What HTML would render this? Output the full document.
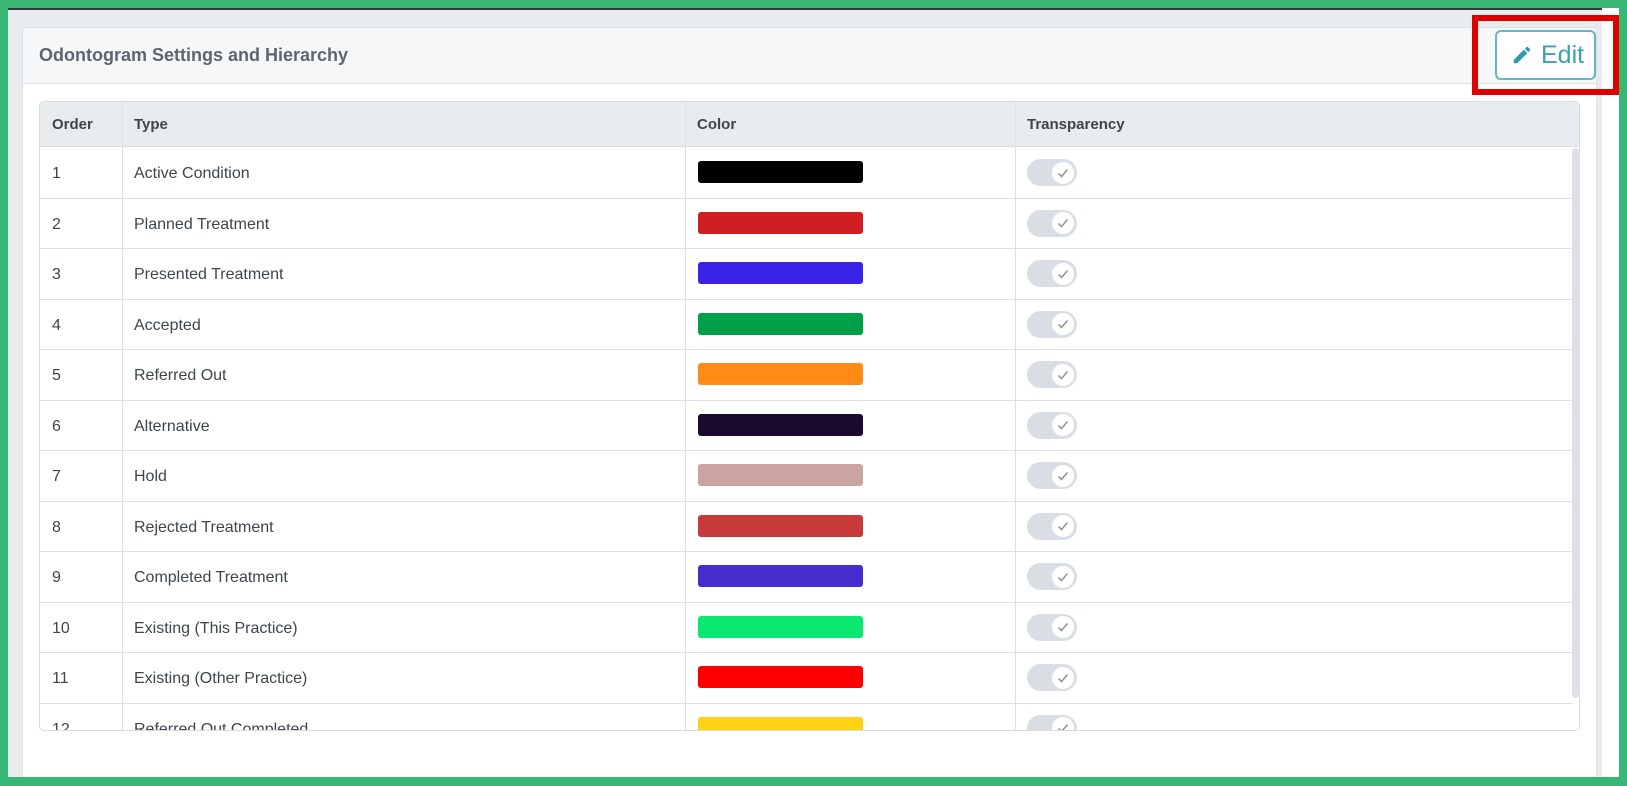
<!DOCTYPE html>
<html><head><meta charset="utf-8"><style>
*{box-sizing:border-box;margin:0;padding:0}
body{width:1627px;height:786px;background:#38b774;position:relative;overflow:hidden;font-family:"Liberation Sans",Arial,sans-serif}
.inner{position:absolute;left:8px;top:8px;width:1611px;height:769px;background:#e9ecef}
.topline{position:absolute;left:8px;top:8px;width:1596px;height:2px;background:#343a40}
.rightw{position:absolute;left:1602px;top:8px;width:17px;height:769px;background:#fff}
.card{position:absolute;left:22px;top:27px;width:1575px;height:750px;background:#fff;border:1px solid #dde1e6;border-bottom:none;border-radius:5px 5px 0 0}
.hdr{height:56px;background:#f6f7f9;border-bottom:1px solid #dde1e6;border-radius:5px 5px 0 0;padding-left:16px;line-height:54px;font-weight:bold;font-size:18px;color:#5c6670}
.tbl{position:absolute;left:39px;top:101px;width:1541px;height:630px;border:1px solid #d8dde3;border-radius:5px;overflow:hidden}
.th{position:absolute;left:0;top:0;width:100%;height:45px;background:#e9ecef;border-bottom:1px solid #d8dde3}
.cell{position:absolute;font-size:16px;color:#3d454d}
.vl{position:absolute;top:0;width:1px;height:630px;background:#dde1e6}
.hl{position:absolute;left:0;width:1532px;height:1px;background:#dde1e6}
.sw{position:absolute;left:658px;width:165px;height:22px;border-radius:3px}
.tg{position:absolute;left:987px;width:50px;height:27px;border-radius:14px;background:#d9dee5}
.tg i{position:absolute;right:3px;top:2.5px;width:22px;height:22px;border-radius:50%;background:#fff}
.tg svg{position:absolute;left:5px;top:5px}
.sb{position:absolute;left:1532px;top:46px;width:7px;height:550px;background:#dde1e6;border-radius:4px}
.red{position:absolute;left:1472px;top:15px;width:147px;height:80px;border:6px solid #e00000}
.edit{position:absolute;left:1495px;top:30px;width:101px;height:50px;border:2px solid #6ab3c1;border-radius:6px;background:#fff;color:#3aa0b3;font-size:25px;line-height:46px;padding-left:44px}
.edit svg{position:absolute;left:14px;top:12px}
</style></head><body>
<div class="inner"></div><div class="topline"></div><div class="rightw"></div>
<div class="card"><div class="hdr">Odontogram Settings and Hierarchy</div></div>
<div class="tbl">
<div class="th"></div>
<div class="vl" style="left:82px"></div><div class="vl" style="left:645px"></div><div class="vl" style="left:975px"></div>
<div class="cell" style="left:12px;top:14px;font-weight:bold;font-size:15px">Order</div>
<div class="cell" style="left:94px;top:14px;font-weight:bold;font-size:15px">Type</div>
<div class="cell" style="left:657px;top:14px;font-weight:bold;font-size:15px">Color</div>
<div class="cell" style="left:987px;top:14px;font-weight:bold;font-size:15px">Transparency</div>
<div id="rows"></div>
<div class="sb"></div>
</div>
<div class="red"></div>
<div class="edit"><svg width="22" height="22" viewBox="0 0 24 24"><path fill="#2d9ab0" d="M3 17.25V21h3.75L17.81 9.94l-3.75-3.75L3 17.25zM20.71 7.04a1 1 0 000-1.41l-2.34-2.34a1 1 0 00-1.41 0l-1.83 1.83 3.75 3.75 1.83-1.83z"/></svg>Edit</div>
<script>
var d=[["Active Condition","#000000"],["Planned Treatment","#cf1f23"],["Presented Treatment","#3a22e6"],["Accepted","#00a04a"],["Referred Out","#ff8a16"],["Alternative","#1a0a2e"],["Hold","#cba3a3"],["Rejected Treatment","#c83a3a"],["Completed Treatment","#472bcd"],["Existing (This Practice)","#0be86f"],["Existing (Other Practice)","#ff0000"],["Referred Out Completed","#ffd314"]];
var h="";
for(var i=0;i<d.length;i++){var t=45+i*50.5;
if(i>0)h+='<div class="hl" style="top:'+t+'px"></div>';
h+='<div class="cell" style="left:12px;top:'+(t+18)+'px">'+(i+1)+'</div>';
h+='<div class="cell" style="left:94px;top:'+(t+18)+'px">'+d[i][0]+'</div>';
h+='<div class="sw" style="top:'+(t+14)+'px;background:'+d[i][1]+'"></div>';
h+='<div class="tg" style="top:'+(t+12)+'px"><i><svg width="12" height="12" viewBox="0 0 12 12"><path d="M1.5 6.5l3 3 6-7" fill="none" stroke="#8a939c" stroke-width="1.5"/></svg></i></div>';}
document.getElementById("rows").outerHTML=h;
</script>
</body></html>
